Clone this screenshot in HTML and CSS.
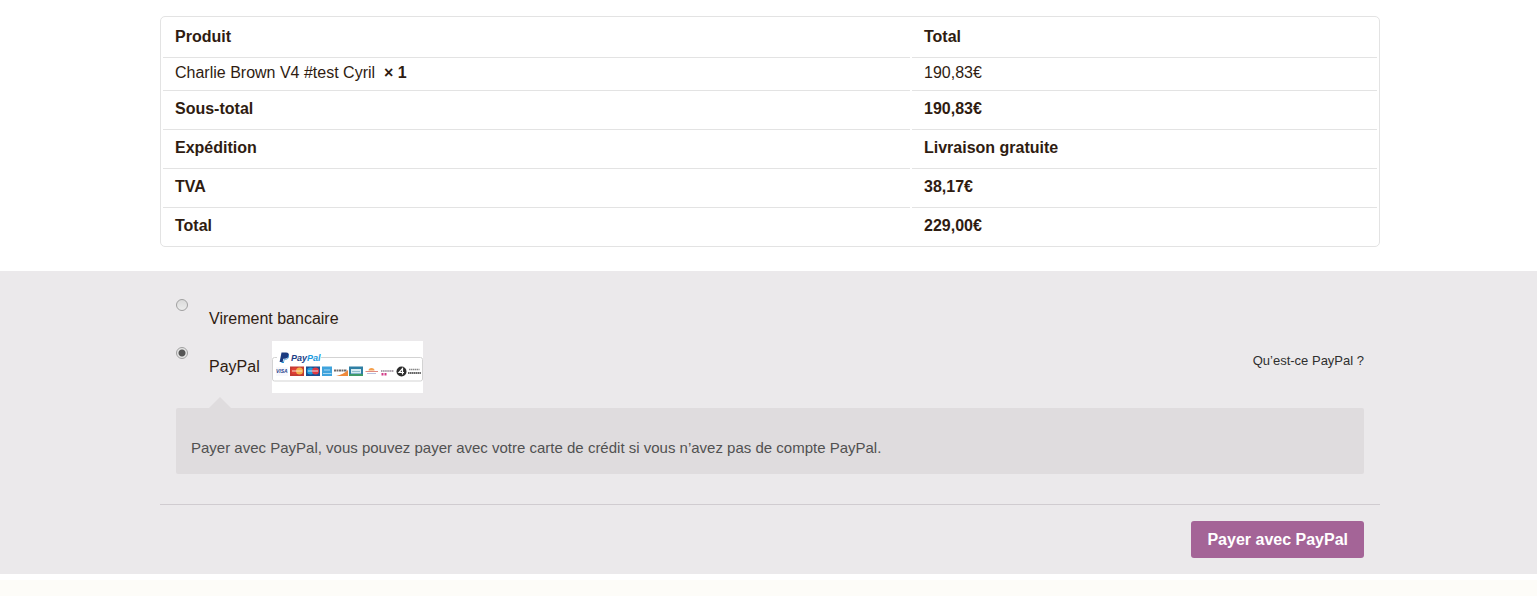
FILE: index.html
```
<!DOCTYPE html>
<html lang="fr">

<head>
    <meta charset="UTF-8">
    <meta name="viewport" content="width=device-width, initial-scale=1.0">
    <title>Paiement de la commande</title>
    <link rel="stylesheet" href="styles.css">
</head>

<body>
    <main>
        <section class="order">
            <table class="shop-table">
                <thead>
                    <tr>
                        <th class="product-name" scope="col">Produit</th>
                        <th class="product-total" scope="col">Total</th>
                    </tr>
                </thead>
                <tbody>
                    <tr>
                        <td>Charlie Brown V4 #test Cyril&nbsp; <strong>× 1</strong></td>
                        <td>190,83€</td>
                    </tr>
                </tbody>
                <tfoot>
                    <tr>
                        <th scope="row">Sous-total</th>
                        <td>190,83€</td>
                    </tr>
                    <tr>
                        <th scope="row">Expédition</th>
                        <td>Livraison gratuite</td>
                    </tr>
                    <tr>
                        <th scope="row">TVA</th>
                        <td>38,17€</td>
                    </tr>
                    <tr>
                        <th scope="row">Total</th>
                        <td>229,00€</td>
                    </tr>
                </tfoot>
            </table>
        </section>

        <form class="payment">
            <ul class="payment-methods">
                <li class="method">
                    <input type="radio" id="method-bacs" name="payment_method" value="bacs">
                    <label for="method-bacs">Virement bancaire</label>
                </li>
                <li class="method">
                    <input type="radio" id="method-paypal" name="payment_method" value="paypal" checked>
                    <label for="method-paypal">PayPal</label>
                    <svg class="cards" viewBox="0 0 151 52" role="img" aria-label="Cartes acceptées par PayPal">
                        <rect width="151" height="52" fill="#fff"/>
                        <path d="M5 16.500H2.500a2 2 0 0 0-2 2V38a2 2 0 0 0 2 2h146a2 2 0 0 0 2-2V18.500a2 2 0 0 0-2-2H49" fill="none" stroke="#d3d3d3"/>
                        <!-- PayPal -->
                        <path d="M9.500 11.500h4.500c2.400 0 3.300 1.500 2.700 3.500-.6 2-2 2.700-4 2.700h-1.400l-.6 3.300H7.600z" fill="#1b3b80"/>
                        <path d="M16.600 13.800c.6.700.5 1.700.2 2.500-.6 1.700-1.800 2.400-3.500 2.400h-.8l-.7 3.300H9.400l.2-1h1.700l.6-2.700h1.300c2 0 3.200-1.400 3.400-4.500z" fill="#1c8fd6"/>
                        <text class="brand" x="19" y="20" fill="#1f3f86">Pay<tspan fill="#1b9ade">Pal</tspan></text>
                        <!-- Visa -->
                        <rect x="4" y="26" width="12" height="9" fill="#f7f8fc"/>
                        <text class="visa" x="4" y="32">VISA</text>
                        <!-- MasterCard -->
                        <rect x="18" y="25.500" width="14" height="9.500" fill="#c23b32"/>
                        <circle cx="22.500" cy="30" r="3.500" fill="#df3f36"/>
                        <circle cx="27.500" cy="30" r="3.500" fill="#f6b04a"/>
                        <path d="M20 30h10" stroke="#f8e3c8"/>
                        <!-- Maestro -->
                        <rect x="34" y="25.500" width="14" height="9.500" fill="#174f94"/>
                        <circle cx="38.500" cy="30" r="3.500" fill="#1c9bdc"/>
                        <circle cx="43.500" cy="30" r="3.500" fill="#e03a42"/>
                        <path d="M36 30h10" stroke="#dfe2f0"/>
                        <!-- American Express -->
                        <rect x="50" y="25.500" width="10" height="9.500" fill="#3fa3dc"/>
                        <path d="M52 29h6M51 32.500h8.500" stroke="#a5d6f2"/>
                        <!-- Discover -->
                        <path d="M76 29v6H64c5-1 9-3 12-6z" fill="#f08a3c"/>
                        <path d="M62 29.500h13" stroke="#706a6a" stroke-width="2" stroke-dasharray="2 .5"/>
                        <!-- Carte bleue -->
                        <rect x="77" y="25.500" width="14" height="9.500" fill="#2f7fa4"/>
                        <rect x="77" y="33" width="14" height="2" fill="#3f9a68"/>
                        <rect x="79" y="28" width="10" height="4.500" fill="#d6ebf0"/>
                        <path d="M80 30.500h8" stroke="#91bfce"/>
                        <!-- Aurore -->
                        <path d="M96.500 29.500a3 2.500 0 0 1 6 0z" fill="#f5a04c"/>
                        <path d="M93.500 30.500h12.500" stroke="#e08a80"/>
                        <path d="M95 32.500h9" stroke="#b9bfdc"/>
                        <!-- Cofinoga -->
                        <path d="M109 30h13" stroke="#aaa0aa" stroke-width="2" stroke-dasharray="1.500 .6"/>
                        <path d="M109.500 32h2v2.500h-2zM112.500 32h2v2.500h-2z" fill="#d13a86"/>
                        <!-- 4 étoiles -->
                        <circle cx="129.500" cy="30.500" r="5" fill="#2c2c2c"/>
                        <path d="M130.500 33.500V27.500l-3.500 4h5" fill="none" stroke="#fff" stroke-width="1.200"/>
                        <path d="M137 28.500h10.500" stroke="#888" stroke-width="1.500" stroke-dasharray="1.500 .5"/>
                        <path d="M136 32h13" stroke="#666" stroke-width="1.800" stroke-dasharray="1.500 .4"/>
                    </svg>
                    <a class="about-paypal" href="#">Qu’est-ce PayPal ?</a>
                </li>
            </ul>
            <div class="payment-box">
                <p>Payer avec PayPal, vous pouvez payer avec votre carte de crédit si vous n’avez pas de compte PayPal.</p>
            </div>
            <div class="place-order">
                <button type="submit">Payer avec PayPal</button>
            </div>
        </form>
    </main>
    <footer class="footer"></footer>
</body>

</html>
```

FILE: styles.css
```
* {
    box-sizing: border-box;
}

body {
    margin: 0;
    background-color: #fff;
    color: #2f1c11;
    font-family: "Liberation Sans", Arial, sans-serif;
    font-size: 16px;
    line-height: 24px;
}

.order {
    padding: 16px 157px 24px 160px;
}

/* order summary */
.shop-table {
    width: 100%;
    border: 1px solid #e3e3e3;
    border-collapse: separate;
    border-spacing: 2px;
    border-radius: 5px;
}

.shop-table th,
.shop-table td {
    padding: 6px 12px;
    text-align: left;
}

.shop-table .product-total {
    width: 465px;
}

.shop-table tbody td {
    padding: 3px 12px;
    border-top: 1px solid #e3e3e3;
}

.shop-table tfoot th,
.shop-table tfoot td {
    border-top: 1px solid #e3e3e3;
    font-weight: bold;
}

/* payment */
.payment {
    padding: 24px 157px 16px 160px;
    background-color: #ebe9eb;
}

.payment-methods {
    margin: 0;
    padding: 0 16px;
    list-style: none;
}

.method {
    display: flex;
    align-items: flex-start;
}

.method input {
    appearance: none;
    width: 12px;
    height: 12px;
    margin: 4px 21px 0 0;
    border: 1px solid #a0a0a0;
    border-radius: 50%;
    background: linear-gradient(#dadada, #ececec);
}

.method input:checked {
    background: radial-gradient(circle, #555 0 3px, #e6e6e6 4px);
}

.method label {
    margin-top: 12px;
    padding-bottom: 12px;
}

.cards {
    width: 151px;
    height: 52px;
    margin-left: 12px;
    margin-top: -2px;
}

.brand {
    font-size: 9px;
    font-weight: bold;
    font-style: italic;
}

.visa {
    font-size: 5px;
    font-weight: bold;
    font-style: italic;
    fill: #27418c;
}

.about-paypal {
    margin-top: 6px;
    margin-left: auto;
    color: #2f2f2f;
    font-size: 13px;
    text-decoration: none;
}

.payment-box {
    position: relative;
    margin: 15px 16px 30px;
    padding: 28px 15px 14px;
    border-radius: 2px;
    background-color: #dfdcde;
    color: #515151;
    font-size: 15px;
}

/* arrow pointing at the selected method */
.payment-box::before {
    content: "";
    position: absolute;
    bottom: 100%;
    left: 33px;
    border: 11px solid transparent;
    border-top: 0;
    border-bottom-color: #dfdcde;
}

.payment-box p {
    margin: 0;
}

.place-order {
    display: flex;
    justify-content: flex-end;
    padding: 16px 16px 0;
    border-top: 1px solid #d0ccd0;
}

.place-order button {
    padding: 7px 16px 6px;
    border: 0;
    border-radius: 3px;
    background-color: #a46497;
    color: #fff;
    font: inherit;
    font-weight: bold;
    cursor: pointer;
}

.footer {
    height: 16px;
    margin-top: 6px;
    background-color: #fdfcf8;
}
```
